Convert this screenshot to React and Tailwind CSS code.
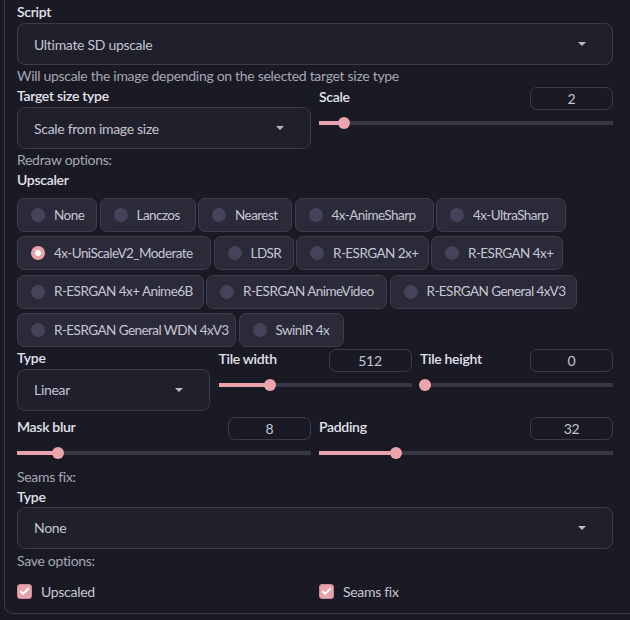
import { Check } from "lucide-react";

const upscalers = [
  [
    { label: "None", w: "w-[80px]" },
    { label: "Lanczos", w: "w-[96px]" },
    { label: "Nearest", w: "w-[94px]" },
    { label: "4x-AnimeSharp", w: "w-[139px]" },
    { label: "4x-UltraSharp", w: "w-[130px]" },
  ],
  [
    { label: "4x-UniScaleV2_Moderate", w: "w-[194px]", checked: true },
    { label: "LDSR", w: "w-[80px]" },
    { label: "R-ESRGAN 2x+", w: "w-[132.5px]" },
    { label: "R-ESRGAN 4x+", w: "w-[132px]" },
  ],
  [
    { label: "R-ESRGAN 4x+ Anime6B", w: "w-[186.5px]" },
    { label: "R-ESRGAN AnimeVideo", w: "w-[181px]" },
    { label: "R-ESRGAN General 4xV3", w: "w-[187px]" },
  ],
  [
    { label: "R-ESRGAN General WDN 4xV3", w: "w-[219px]" },
    { label: "SwinIR 4x", w: "w-[105px]" },
  ],
];

export default function App() {
  return (
    <div className="min-h-[620px] bg-[#1a1a24] font-['Lato',sans-serif] text-[14px] tracking-[-0.3px] text-[#c9c9d6] overflow-hidden">
      <div className="ml-[4px] w-[640px] border border-t-0 border-[#3a3a48] rounded-bl-[9px] pl-[12px] pt-[2px] pb-[11px]">
        <div className="w-[596px]">
          {/* SCRIPT */}
          <Label>Script</Label>
          <Dropdown value="Ultimate SD upscale" className="mt-[1px]" />
          <p className="mt-[1px] leading-[20px] text-[#a6a6b6]">
            Will upscale the image depending on the selected target size type
          </p>

          {/* TARGET SIZE */}
          <div className="flex gap-[8px]">
            <div className="w-[294px]">
              <Label>Target size type</Label>
              <Dropdown value="Scale from image size" className="mt-[1px]" />
            </div>
            <div className="w-[294px] pt-[1px]">
              <SliderField label="Scale" value="2" offset={25} />
            </div>
          </div>

          <p className="mt-[1px] leading-[20px] text-[#a6a6b6]">Redraw options:</p>
          <Label>Upscaler</Label>

          {/* UPSCALERS */}
          <div className="mt-[8px] flex flex-col gap-y-[4.3px]">
            {upscalers.map((row, i) => (
              <div key={i} className="flex gap-x-[2.5px]">
                {row.map((opt) => (
                  <Radio key={opt.label} {...opt} />
                ))}
              </div>
            ))}
          </div>

          {/* TILE SETTINGS */}
          <div className="mt-[1px] flex gap-[8.5px]">
            <div className="w-[193px]">
              <Label>Type</Label>
              <Dropdown value="Linear" className="mt-[1px]" />
            </div>
            <div className="w-[193px] pt-[1px]">
              <SliderField label="Tile width" value="512" offset={51} />
            </div>
            <div className="w-[193px] pt-[1px]">
              <SliderField label="Tile height" value="0" offset={5} />
            </div>
          </div>

          <div className="mt-[6px] flex gap-[8px]">
            <div className="w-[294px]">
              <SliderField label="Mask blur" value="8" offset={41} />
            </div>
            <div className="w-[294px]">
              <SliderField label="Padding" value="32" offset={77} />
            </div>
          </div>

          {/* SEAMS FIX */}
          <p className="mt-[8px] leading-[20px] text-[#a6a6b6]">Seams fix:</p>
          <Label>Type</Label>
          <Dropdown value="None" />

          <p className="mt-[2px] leading-[20px] text-[#a6a6b6]">Save options:</p>
          <div className="mt-[10px] flex gap-[8px]">
            <CheckBox label="Upscaled" />
            <CheckBox label="Seams fix" />
          </div>
        </div>
      </div>
    </div>
  );
}

/* ---------- Helpers ---------- */

function Label({ children }) {
  return (
    <p className="leading-[20px] font-semibold text-[#e2e2ec]">{children}</p>
  );
}

function Dropdown({ value, className = "" }) {
  return (
    <div
      className={`h-[42px] flex items-center justify-between rounded-[8px] border border-[#3b3b4a] bg-[#20202c] pl-[16px] pr-[26px] text-[#c4c4d2] ${className}`}
    >
      <span>{value}</span>
      <span className="w-0 h-0 border-l-[4px] border-r-[4px] border-t-[4px] border-l-transparent border-r-transparent border-t-[#b9b9c8]" />
    </div>
  );
}

function SliderField({ label, value, offset }) {
  return (
    <div>
      <div className="flex justify-between items-start h-[24px]">
        <span className="leading-[20px] font-semibold text-[#e2e2ec]">{label}</span>
        <div className="w-[83px] h-[23px] rounded-[7px] border border-[#3b3b4a] flex items-center justify-center text-[#c4c4d2]">
          {value}
        </div>
      </div>
      <div className="relative h-[12px] mt-[6px]">
        <div className="absolute left-0 right-0 top-[4px] h-[4px] bg-[#363645]" />
        <div
          className="absolute left-0 top-[4px] h-[4px] bg-[#e8a2ac]"
          style={{ width: offset }}
        />
        <div
          className="absolute top-0 w-[12px] h-[12px] rounded-full bg-[#eba5af]"
          style={{ left: offset - 6 }}
        />
      </div>
    </div>
  );
}

function Radio({ label, w, checked }) {
  return (
    <div
      className={`${w} h-[34px] shrink-0 flex items-center rounded-[7px] border border-[#3d3d4d] bg-[#2a2a38] pl-[13px] whitespace-nowrap overflow-hidden`}
    >
      {checked ? (
        <span className="shrink-0 w-[14px] h-[14px] rounded-full bg-[#e8a2ac] flex items-center justify-center">
          <span className="w-[6px] h-[6px] rounded-full bg-white" />
        </span>
      ) : (
        <span className="shrink-0 w-[14px] h-[14px] rounded-full bg-[#43435a]" />
      )}
      <span className="ml-[9px] text-[13.5px] tracking-[-0.55px] text-[#c6c6d4]">{label}</span>
    </div>
  );
}

function CheckBox({ label }) {
  return (
    <div className="w-[294px] flex items-center">
      <span className="shrink-0 w-[15px] h-[15px] rounded-[3px] bg-[#e8a2ac] border border-[#c98b95] flex items-center justify-center">
        <Check size={11} strokeWidth={4} className="text-white" />
      </span>
      <span className="ml-[9px] text-[#c6c6d4]">{label}</span>
    </div>
  );
}
